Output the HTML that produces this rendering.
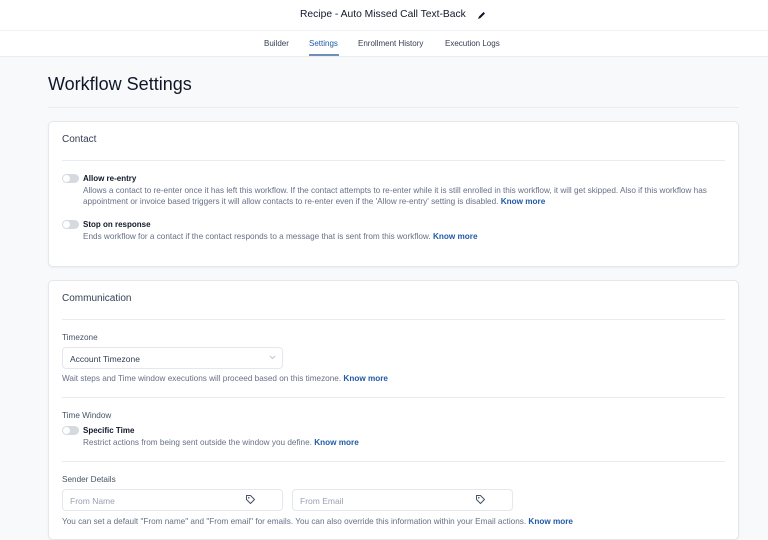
<!DOCTYPE html>
<html><head><style>
*{margin:0;padding:0;box-sizing:border-box}
body{width:768px;height:527px;overflow:hidden;background:#f8f9fb;font-family:"Liberation Sans",sans-serif;position:relative;color:#344054}
.a{position:absolute;white-space:nowrap}
.hdr{position:absolute;left:0;top:0;width:768px;height:57px;background:#fff;border-bottom:1px solid #eaecf0}
.line{position:absolute;height:1px;background:#eaecf0}
.card{position:absolute;left:48px;width:691px;background:#fff;border:1px solid #e4e7ec;border-radius:5px;box-shadow:0 1px 2px rgba(0,0,0,.05)}
.t{font-size:8.2px;color:#667085}
.b{font-size:8px;font-weight:bold;color:#101828}
.k{color:#1f5aa6;font-weight:bold}
.tg{position:absolute;width:17px;height:9px;border-radius:5px;background:#d5d9e0}
.tg:after{content:"";position:absolute;left:1px;top:1px;width:7px;height:7px;border-radius:50%;background:#fff}
.in{position:absolute;height:22px;border:1px solid #e4e7ec;border-radius:4px;background:#fff;font-size:8.5px;color:#98a2b3;padding:6px 7px}
</style></head><body>
<div class="hdr"></div>
<div class="line" style="left:0;top:30px;width:768px;background:#f0f1f3"></div>
<div class="a" style="left:300px;top:9px;font-size:10.3px;color:#101828">Recipe - Auto Missed Call Text-Back</div>
<svg class="a" style="left:477px;top:11px" width="9" height="9" viewBox="0 0 9 9"><path d="M1 8L2 5.5 6.5 1 8 2.5 3.5 7Z" fill="#101828"/></svg>
<div class="a" style="left:264px;top:39px;font-size:8px;color:#344054">Builder</div>
<div class="a" style="left:309px;top:39px;font-size:8px;color:#1f5aa6">Settings</div>
<div class="a" style="left:309px;top:54px;width:30px;height:2px;background:#6f8fb8"></div>
<div class="a" style="left:358px;top:39px;font-size:8px;color:#344054">Enrollment History</div>
<div class="a" style="left:445px;top:39px;font-size:8px;color:#344054">Execution Logs</div>
<div class="a" style="left:48px;top:74px;font-size:18px;color:#101828">Workflow Settings</div>
<div class="line" style="left:48px;top:107px;width:691px"></div>

<div class="card" style="top:121px;height:146px"></div>
<div class="a" style="left:62px;top:134px;font-size:10px;color:#344054">Contact</div>
<div class="line" style="left:62px;top:160px;width:663px"></div>
<div class="tg" style="left:62px;top:174px"></div>
<div class="a b" style="left:83px;top:174px">Allow re-entry</div>
<div class="a t" style="left:83px;top:186px">Allows a contact to re-enter once it has left this workflow. If the contact attempts to re-enter while it is still enrolled in this workflow, it will get skipped. Also if this workflow has</div>
<div class="a t" style="left:83px;top:197px">appointment or invoice based triggers it will allow contacts to re-enter even if the 'Allow re-entry' setting is disabled. <span class="k">Know more</span></div>
<div class="tg" style="left:62px;top:220px"></div>
<div class="a b" style="left:83px;top:220px">Stop on response</div>
<div class="a t" style="left:83px;top:232px">Ends workflow for a contact if the contact responds to a message that is sent from this workflow. <span class="k">Know more</span></div>

<div class="card" style="top:280px;height:260px"></div>
<div class="a" style="left:62px;top:293px;font-size:10px;color:#344054">Communication</div>
<div class="line" style="left:62px;top:319px;width:663px"></div>
<div class="a t" style="left:62px;top:333px;color:#475467">Timezone</div>
<div class="in" style="left:62px;top:347px;width:221px;color:#344054">Account Timezone</div>
<svg class="a" style="left:269px;top:355px" width="7" height="5"><path d="M1 1L3.5 3.5 6 1" stroke="#c0c5cc" fill="none"/></svg>
<div class="a t" style="left:62px;top:374px">Wait steps and Time window executions will proceed based on this timezone. <span class="k">Know more</span></div>
<div class="line" style="left:62px;top:397px;width:663px"></div>
<div class="a t" style="left:62px;top:411px;color:#475467">Time Window</div>
<div class="tg" style="left:62px;top:426px"></div>
<div class="a b" style="left:83px;top:426px">Specific Time</div>
<div class="a t" style="left:83px;top:438px">Restrict actions from being sent outside the window you define. <span class="k">Know more</span></div>
<div class="line" style="left:62px;top:461px;width:663px"></div>
<div class="a t" style="left:62px;top:475px;color:#475467">Sender Details</div>
<div class="in" style="left:62px;top:489px;width:221px">From Name</div>
<div class="in" style="left:292px;top:489px;width:221px">From Email</div>
<svg class="a" style="left:245px;top:494px" width="11" height="11" viewBox="0 0 11 11"><path d="M1.5 1.5H5.5L9.5 5.5 5.5 9.5 1.5 5.5Z" fill="none" stroke="#475467"/><circle cx="3.8" cy="3.8" r=".8" fill="#475467"/></svg>
<svg class="a" style="left:475px;top:494px" width="11" height="11" viewBox="0 0 11 11"><path d="M1.5 1.5H5.5L9.5 5.5 5.5 9.5 1.5 5.5Z" fill="none" stroke="#475467"/><circle cx="3.8" cy="3.8" r=".8" fill="#475467"/></svg>
<div class="a t" style="left:62px;top:517px">You can set a default "From name" and "From email" for emails. You can also override this information within your Email actions. <span class="k">Know more</span></div>
</body></html>
